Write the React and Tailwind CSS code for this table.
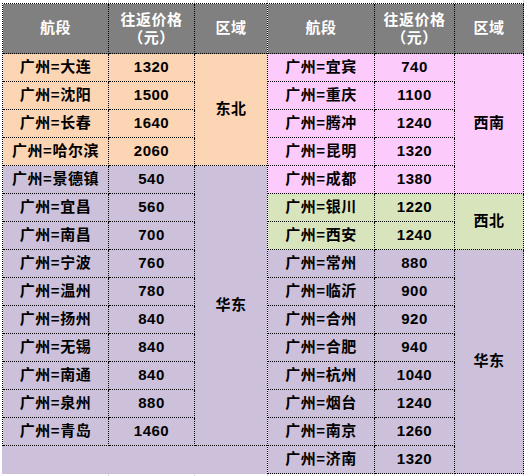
import React from "react";

const leftRows = [
  ["大连", 1320], ["沈阳", 1500], ["长春", 1640], ["哈尔滨", 2060],
  ["景德镇", 540], ["宜昌", 560], ["南昌", 700], ["宁波", 760], ["温州", 780],
  ["扬州", 840], ["无锡", 840], ["南通", 840], ["泉州", 880], ["青岛", 1460],
];

const rightRows = [
  ["宜宾", 740], ["重庆", 1100], ["腾冲", 1240], ["昆明", 1320], ["成都", 1380],
  ["银川", 1220], ["西安", 1240],
  ["常州", 880], ["临沂", 900], ["合州", 920], ["合肥", 940], ["杭州", 1040],
  ["烟台", 1240], ["南京", 1260], ["济南", 1320],
];

const cell = "flex items-center justify-center border-b border-r border-dotted border-black";

function Header({ last }) {
  return (
    <>
      <div className={`${cell} bg-[#808080] text-white`}>航段</div>
      <div className={`${cell} bg-[#808080] text-white flex-col leading-[18px]`}>
        <span>往返价格</span>
        <span>（元）</span>
      </div>
      <div className={`${cell} bg-[#808080] text-white ${last ? "" : "border-r-0"}`}>区域</div>
    </>
  );
}

function Rows({ rows, groups, lastOpen }) {
  const out = [];
  let i = 0;
  groups.forEach((g) => {
    rows.slice(i, i + g.n).forEach(([city, price], k) => {
      out.push(
        <div key={city + "n"} className={`${cell} ${g.bg}`}>广州=<span>{city}</span></div>
      );
      out.push(
        <div key={city + "p"} className={`${cell} ${g.bg}`}>{price}</div>
      );
      if (k === 0) {
        out.push(
          <div key={g.name + i} className={`${cell} ${g.bg} ${g.span} ${lastOpen ? "border-r-0" : ""}`}>
            {g.name}
          </div>
        );
      }
    });
    i += g.n;
  });
  return out;
}

function GridStrip() {
  return (
    <div className="flex h-[3px] w-full">
      <div className="w-[109px] h-full border-r border-[#d9d9d9]" />
      <div className="w-[86px] h-full border-r border-[#d9d9d9]" />
      <div className="w-[73px] h-full border-r border-[#d9d9d9]" />
      <div className="w-[107px] h-full border-r border-[#d9d9d9]" />
      <div className="w-[80px] h-full border-r border-[#d9d9d9]" />
      <div className="w-[69px] h-full border-r border-[#d9d9d9]" />
    </div>
  );
}

export default function App() {
  return (
    <div
      className="w-[525px] h-[476px] bg-white overflow-hidden text-[15px] font-bold text-black tracking-[0.5px]"
      style={{ fontFamily: '"Liberation Sans", "Noto Sans CJK SC", sans-serif' }}
    >
      <GridStrip />
      <div className="flex pl-[2px]">
        <div className="flex flex-col">
          <div className="grid grid-cols-[106px_86px_72px] grid-rows-[50px_repeat(14,28px)] border-t border-l border-dotted border-black">
            <Header />
            <Rows
              rows={leftRows}
              lastOpen
              groups={[
                { n: 4, name: "东北", bg: "bg-[#fcd5b4]", span: "row-span-4" },
                { n: 10, name: "华东", bg: "bg-[#ccc0da]", span: "row-span-10" },
              ]}
            />
          </div>
          <div className="h-[28px] bg-[#ccc0da]" />
        </div>
        <div className="grid grid-cols-[107px_80px_69px] grid-rows-[50px_repeat(15,28px)] border-t border-l border-dotted border-black">
          <Header last />
          <Rows
            rows={rightRows}
            groups={[
              { n: 5, name: "西南", bg: "bg-[#fccbfc]", span: "row-span-5" },
              { n: 2, name: "西北", bg: "bg-[#d8e4bc]", span: "row-span-2" },
              { n: 8, name: "华东", bg: "bg-[#ccc0da]", span: "row-span-8" },
            ]}
          />
        </div>
      </div>
      <GridStrip />
    </div>
  );
}
